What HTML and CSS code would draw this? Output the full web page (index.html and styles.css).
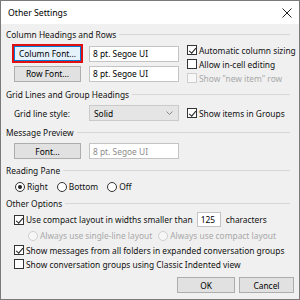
FILE: index.html
```html
<!DOCTYPE html>
<html>
<head>
<meta charset="utf-8">
<link rel="stylesheet" href="styles.css">
</head>
<body>
<div class="window">
  <div class="titlebar">
    <span class="title">Other Settings</span>
    <svg class="close" width="10" height="10" viewBox="0 0 10 10"><path d="M0.5 0.5 L9.5 9.5 M9.5 0.5 L0.5 9.5" stroke="#222" stroke-width="1" fill="none"/></svg>
  </div>
  <div class="content">
    <div class="group-head h1"><span>Column Headings and Rows</span><i></i></div>
    <div class="sec1">
      <div class="leftcol">
        <div class="frow r1"><span class="hl"><span class="btn focus">Column Font...</span></span><span class="field">8 pt. Segoe UI</span></div>
        <div class="frow r2"><span class="btn">Row Font...</span><span class="field">8 pt. Segoe UI</span></div>
      </div>
      <div class="rightcol">
        <label class="chk"><span class="box on"></span>Automatic column sizing</label>
        <label class="chk"><span class="box"></span>Allow in-cell editing</label>
        <label class="chk dis"><span class="box"></span>Show "new item" row</label>
      </div>
    </div>

    <div class="group-head h2"><span>Grid Lines and Group Headings</span><i></i></div>
    <div class="frow sec2">
      <span class="lbl">Grid line style:</span>
      <span class="select">Solid<svg width="7" height="4" viewBox="0 0 7 4"><path d="M0.5 0.5 L3.5 3.5 L6.5 0.5" stroke="#888" fill="none"/></svg></span>
      <label class="chk"><span class="box on"></span>Show items in Groups</label>
    </div>

    <div class="group-head h3"><span>Message Preview</span><i></i></div>
    <div class="frow sec3"><span class="btn">Font...</span><span class="field dis">8 pt. Segoe UI</span></div>

    <div class="group-head h4"><span>Reading Pane</span><i></i></div>
    <div class="radios">
      <label class="rad"><span class="dot on"></span>Right</label>
      <label class="rad"><span class="dot"></span>Bottom</label>
      <label class="rad"><span class="dot"></span>Off</label>
    </div>

    <div class="group-head h5"><span>Other Options</span><i></i></div>
    <div class="opt o1"><label class="chk"><span class="box on"></span>Use compact layout in widths smaller than</label><span class="num">125</span><span class="after">characters</span></div>
    <div class="opt o2">
      <label class="rad dis"><span class="dot"></span>Always use single-line layout</label>
      <label class="rad dis r2b"><span class="dot"></span>Always use compact layout</label>
    </div>
    <div class="opt o3"><label class="chk"><span class="box on"></span>Show messages from all folders in expanded conversation groups</label></div>
    <div class="opt o4"><label class="chk"><span class="box"></span>Show conversation groups using Classic Indented view</label></div>

    <div class="footer">
      <span class="btn okb">OK</span>
      <span class="btn cancel">Cancel</span>
    </div>
  </div>
</div>
</body>
</html>
```

FILE: styles.css
```css
html, body {
  margin: 0;
  padding: 0;
  background: #ffffff;
}
.window {
  width: 298px;
  height: 298px;
  border: 1px solid #7a7a7a;
  background: #f0f0f0;
  font-family: "Noto Sans", "Open Sans", sans-serif;
  font-size: 8.4px;
  color: #111;
  overflow: hidden;
  display: flex;
  flex-direction: column;
}
.titlebar {
  height: 23px;
  background: #ffffff;
  display: flex;
  align-items: center;
  justify-content: space-between;
  padding: 0 7px 0 7px;
  flex: none;
}
.title {
  font-size: 8.7px;
  color: #000;
}
.close {
  display: block;
}
.content {
  padding: 4px 9px 0 5px;
  display: flex;
  flex-direction: column;
}
.group-head {
  display: flex;
  align-items: center;
  height: 12px;
  gap: 3px;
}
.group-head span { white-space: nowrap; }
.group-head i {
  flex: 1;
  height: 1px;
  background: #d7d7d7;
}
.sec1 {
  display: flex;
  padding-top: 3px;
  height: 45px;
}
.leftcol {
  display: flex;
  flex-direction: column;
  gap: 1px;
  padding-top: 1px;
  padding-left: 8px;
}
.frow {
  display: flex;
  align-items: center;
  height: 19px;
}
.btn {
  box-sizing: border-box;
  display: flex;
  align-items: center;
  justify-content: center;
  width: 67px;
  height: 16px;
  background: #e1e1e1;
  border: 1px solid #adadad;
  color: #000;
}
.hl {
  display: block;
  border: 2px solid #e01010;
  padding: 0;
  margin-left: -2px;
  margin-right: -2px;
}
.btn.focus {
  background: #e5f1fb;
  border: 1px solid #0078d7;
  height: 15px;
}
.field {
  box-sizing: border-box;
  display: flex;
  align-items: center;
  width: 90px;
  height: 16px;
  margin-left: 8px;
  padding-left: 3px;
  background: #fff;
  border: 1px solid #c4c4c4;
  color: #000;
}
.field.dis { color: #8c8c8c; }
.rightcol {
  display: flex;
  flex-direction: column;
  padding-left: 8px;
}
.chk, .rad {
  display: flex;
  align-items: center;
  height: 14px;
  white-space: nowrap;
}
.box {
  box-sizing: border-box;
  width: 10px;
  height: 10px;
  border: 1px solid #333;
  background: #fff;
  margin-right: 2px;
  position: relative;
  flex: none;
}
.box.on::after {
  content: "";
  position: absolute;
  left: 1px;
  top: -1px;
  width: 3px;
  height: 6px;
  border-right: 1px solid #222;
  border-bottom: 1px solid #222;
  transform: rotate(40deg) translate(2px, 0px);
}
.dis { color: #a8a8a8; }
.dis .box, .dis .dot { border-color: #cfcfcf; background: #f7f7f7; }
.sec2 {
  padding-left: 8px;
  height: 26px;
}
.lbl { width: 75px; }
.select {
  box-sizing: border-box;
  width: 90px;
  height: 16px;
  display: flex;
  align-items: center;
  justify-content: space-between;
  padding: 0 5px 0 4px;
  background: #e5e5e5;
  border: 1px solid #cacaca;
  color: #000;
}
.select svg { display: block; }
.sec2 .chk { margin-left: 8px; }
.sec3 {
  padding-left: 8px;
  height: 26px;
}
.sec3 .field { margin-left: 8px; }
.radios {
  display: flex;
  align-items: center;
  height: 21px;
  padding-left: 9px;
  gap: 9px;
}
.dot {
  box-sizing: border-box;
  width: 10px;
  height: 10px;
  border-radius: 50%;
  border: 1px solid #333;
  background: #fff;
  margin-right: 2px;
  position: relative;
  flex: none;
}
.dot.on::after {
  content: "";
  position: absolute;
  left: 2px;
  top: 2px;
  width: 4px;
  height: 4px;
  border-radius: 50%;
  background: #222;
}
.opt {
  display: flex;
  align-items: center;
  padding-left: 8px;
  height: 14px;
  white-space: nowrap;
}
.o1 { height: 17px; margin-top: 2px; }
.o2 { height: 15px; padding-left: 22px; }
.num {
  box-sizing: border-box;
  width: 24px;
  height: 15px;
  background: #fff;
  border: 1px solid #c4c4c4;
  margin-left: 4px;
  display: flex;
  align-items: center;
  padding-left: 3px;
  color: #000;
}
.after { margin-left: 5px; }
.r2b { margin-left: 6px; }
.footer {
  display: flex;
  justify-content: flex-end;
  gap: 4px;
  margin-top: 6px;
  margin-right: -4px;
}
.okb, .cancel { width: 58px; height: 16px; }
.cancel { width: 55px; }
```
